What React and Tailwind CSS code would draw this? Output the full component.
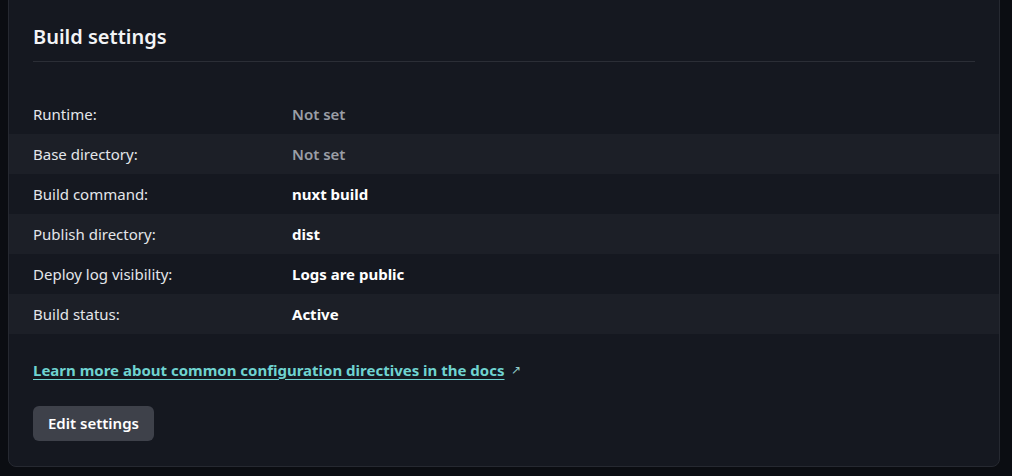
import React from "react";

const rows = [
  { label: "Runtime:", value: "Not set", muted: true },
  { label: "Base directory:", value: "Not set", muted: true },
  { label: "Build command:", value: "nuxt build" },
  { label: "Publish directory:", value: "dist" },
  { label: "Deploy log visibility:", value: "Logs are public" },
  { label: "Build status:", value: "Active" },
];

export default function App() {
  return (
    <div
      className="w-[1012px] h-[476px] overflow-hidden bg-[#0b0d12] pl-[8px] pr-[12px]"
      style={{ fontFamily: '"Noto Sans", "Open Sans", sans-serif' }}
    >
      <div className="-mt-[12px] rounded-[8px] border border-[#262931] bg-[#151820] pt-[33px] pb-[25px]">
        <div className="mx-[24px] border-b border-[#2b2e36] pb-[9px]">
          <h2 className="text-[20px] leading-[30px] font-semibold text-[#f3f4f6]">Build settings</h2>
        </div>
        <div className="mt-[32px] flex flex-col">
          {rows.map((r, i) => (
            <div
              key={r.label}
              className={`flex h-[40px] items-center px-[24px] text-[15px] ${i % 2 === 1 ? "bg-[#1c1f27]" : ""}`}
            >
              <div className="w-[259px] text-[#e4e6ea]">{r.label}</div>
              <div className={r.muted ? "font-semibold text-[#9a9ea6]" : "font-bold text-[#ffffff]"}>{r.value}</div>
            </div>
          ))}
        </div>
        <div className="mt-[25px] px-[24px] flex items-center gap-[6px]">
          <a href="#" className="text-[15px] font-bold text-[#6fd3d0] underline underline-offset-[3px]">
            Learn more about common configuration directives in the docs
          </a>
          <span className="text-[12px] text-[#8fc9c8]">↗</span>
        </div>
        <div className="mt-[24px] px-[24px]">
          <button className="h-[35px] rounded-[6px] bg-[#3e414a] px-[15px] text-[15px] font-semibold text-white">
            Edit settings
          </button>
        </div>
      </div>
    </div>
  );
}
